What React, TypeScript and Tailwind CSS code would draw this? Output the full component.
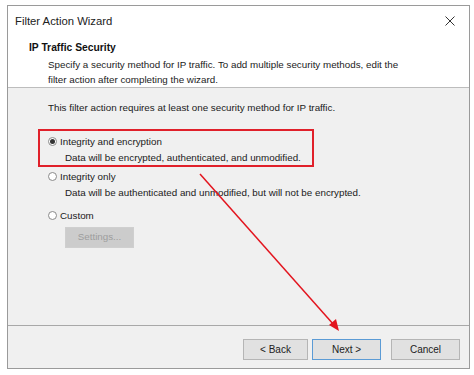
import React from 'react';

function Radio({ checked }: { checked?: boolean }) {
  return (
    <span className="flex h-[9px] w-[9px] shrink-0 items-center justify-center rounded-full border border-[#8a8a8a] bg-white">
      {checked && <span className="h-[5px] w-[5px] rounded-full bg-[#333]" />}
    </span>
  );
}

function Btn({ children, w, primary }: { children: React.ReactNode; w: string; primary?: boolean }) {
  return (
    <button
      className={`flex h-[21px] items-center justify-center border bg-[#e1e1e1] text-[10px] text-[#222] ${w} ${
        primary ? 'border-[#5b9bd5]' : 'border-[#b5b5b5]'
      }`}
    >
      {children}
    </button>
  );
}

export default function App() {
  return (
    <div className="relative h-[375px] w-[474px] bg-white pl-[7px] pt-[5px] font-['Liberation_Sans',Arial,sans-serif]">
      <div className="flex h-[364px] w-[463px] flex-col border border-[#9a9a9a]">
        {/* title bar + header */}
        <div className="flex h-[82px] flex-col border-b border-[#bdbdbd] bg-white">
          <div className="flex h-[28px] items-center justify-between pl-[7px] pr-[12px] pt-[2px]">
            <span className="text-[11.3px] text-[#222]">Filter Action Wizard</span>
            <svg width="10" height="10" viewBox="0 0 10 10" className="mr-[2px]">
              <path d="M0.5 0.5L9.5 9.5M9.5 0.5L0.5 9.5" stroke="#333" strokeWidth="1" />
            </svg>
          </div>
          <div className="pl-[21px] pt-[7px] text-[10.3px] font-bold leading-[14px] text-[#111]">IP Traffic Security</div>
          <div className="pl-[40px] pt-[2px] text-[9.8px] leading-[15px] text-[#222]">
            Specify a security method for IP traffic. To add multiple security methods, edit the
            <br />
            filter action after completing the wizard.
          </div>
        </div>

        {/* body */}
        <div className="flex flex-1 flex-col bg-[#f0f0f0] text-[9.8px] text-[#1a1a1a]">
          <div className="pl-[40px] pt-[12px] leading-[15px]">
            This filter action requires at least one security method for IP traffic.
          </div>
          <div className="ml-[30px] mt-[14px] flex w-[276px] flex-col border-2 border-[#e0202a] pl-[8px] pt-[3px]">
            <div className="flex items-center gap-[3px] leading-[15px]">
              <Radio checked />
              <span>Integrity and encryption</span>
            </div>
            <div className="pl-[17px] pt-[1px] leading-[15px]">Data will be encrypted, authenticated, and unmodified.</div>
          </div>
          <div className="flex items-center gap-[3px] pl-[40px] pt-[2px] leading-[15px]">
            <Radio />
            <span>Integrity only</span>
          </div>
          <div className="pl-[57px] pt-[1px] leading-[15px]">
            Data will be authenticated and unmodified, but will not be encrypted.
          </div>
          <div className="flex items-center gap-[3px] pl-[40px] pt-[8px] leading-[15px]">
            <Radio />
            <span>Custom</span>
          </div>
          <div className="pl-[57px] pt-[4px]">
            <div className="flex h-[21px] w-[69px] items-center justify-center border border-[#cfcfcf] bg-[#cccccc] text-[#9d9d9d]">
              Settings...
            </div>
          </div>
          <div className="flex-1" />
          <div className="flex h-[43px] items-start justify-end border-t border-[#a8a8a8] pr-[9px] pt-[13px]">
            <Btn w="w-[65px]">&lt; Back</Btn>
            <div className="w-[4px]" />
            <Btn w="w-[69px]" primary>
              Next &gt;
            </Btn>
            <div className="w-[10px]" />
            <Btn w="w-[69px]">Cancel</Btn>
          </div>
        </div>
      </div>

      {/* red annotation arrow */}
      <svg className="pointer-events-none absolute left-0 top-0" width="474" height="375" viewBox="0 0 474 375">
        <line x1="200" y1="174" x2="334" y2="325" stroke="#e3141e" strokeWidth="1.5" />
        <polygon points="339,331 329,325 336,319" fill="#e3141e" />
      </svg>
    </div>
  );
}
